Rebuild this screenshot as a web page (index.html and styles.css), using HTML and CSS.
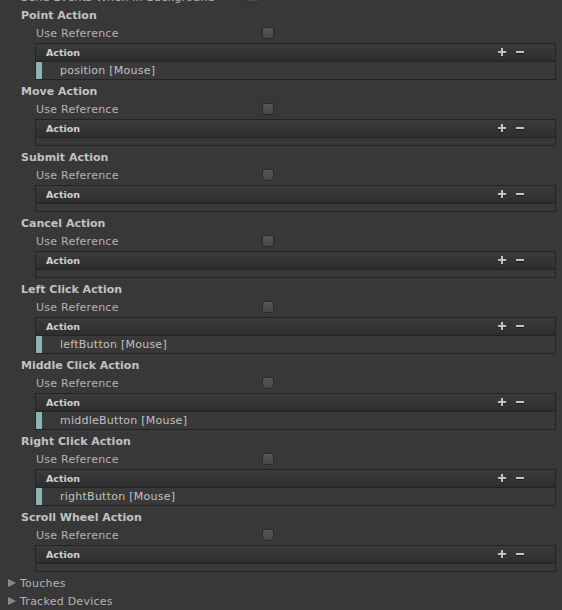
FILE: index.html
```html
<!DOCTYPE html>
<html lang="en">
<head>
    <meta charset="UTF-8">
    <title>Input System UI Input Module</title>
    <link rel="stylesheet" href="styles.css">
</head>
<body>
    <div class="inspector">
        <div class="field top-field">
            <span class="label">Send Events When in Background</span>
            <span class="checkbox"></span>
        </div>

        <div class="section">
            <div class="title">Point Action</div>
            <div class="field"><span class="label">Use Reference</span><span class="checkbox"></span></div>
            <div class="list">
                <div class="list-head"><span>Action</span>
                    <div class="tools">
                        <svg width="9" height="9" viewBox="0 0 9 9"><rect x="3" y="0" width="2" height="8"/><rect x="0" y="3" width="8" height="2"/></svg>
                        <svg width="9" height="9" viewBox="0 0 9 9"><rect x="0" y="3" width="8" height="2"/></svg>
                    </div>
                </div>
                <div class="list-item"><span class="bar"></span>position [Mouse]</div>
            </div>
        </div>

        <div class="section">
            <div class="title">Move Action</div>
            <div class="field"><span class="label">Use Reference</span><span class="checkbox"></span></div>
            <div class="list">
                <div class="list-head"><span>Action</span>
                    <div class="tools">
                        <svg width="9" height="9" viewBox="0 0 9 9"><rect x="3" y="0" width="2" height="8"/><rect x="0" y="3" width="8" height="2"/></svg>
                        <svg width="9" height="9" viewBox="0 0 9 9"><rect x="0" y="3" width="8" height="2"/></svg>
                    </div>
                </div>
                <div class="list-empty"></div>
            </div>
        </div>

        <div class="section">
            <div class="title">Submit Action</div>
            <div class="field"><span class="label">Use Reference</span><span class="checkbox"></span></div>
            <div class="list">
                <div class="list-head"><span>Action</span>
                    <div class="tools">
                        <svg width="9" height="9" viewBox="0 0 9 9"><rect x="3" y="0" width="2" height="8"/><rect x="0" y="3" width="8" height="2"/></svg>
                        <svg width="9" height="9" viewBox="0 0 9 9"><rect x="0" y="3" width="8" height="2"/></svg>
                    </div>
                </div>
                <div class="list-empty"></div>
            </div>
        </div>

        <div class="section">
            <div class="title">Cancel Action</div>
            <div class="field"><span class="label">Use Reference</span><span class="checkbox"></span></div>
            <div class="list">
                <div class="list-head"><span>Action</span>
                    <div class="tools">
                        <svg width="9" height="9" viewBox="0 0 9 9"><rect x="3" y="0" width="2" height="8"/><rect x="0" y="3" width="8" height="2"/></svg>
                        <svg width="9" height="9" viewBox="0 0 9 9"><rect x="0" y="3" width="8" height="2"/></svg>
                    </div>
                </div>
                <div class="list-empty"></div>
            </div>
        </div>

        <div class="section">
            <div class="title">Left Click Action</div>
            <div class="field"><span class="label">Use Reference</span><span class="checkbox"></span></div>
            <div class="list">
                <div class="list-head"><span>Action</span>
                    <div class="tools">
                        <svg width="9" height="9" viewBox="0 0 9 9"><rect x="3" y="0" width="2" height="8"/><rect x="0" y="3" width="8" height="2"/></svg>
                        <svg width="9" height="9" viewBox="0 0 9 9"><rect x="0" y="3" width="8" height="2"/></svg>
                    </div>
                </div>
                <div class="list-item"><span class="bar"></span>leftButton [Mouse]</div>
            </div>
        </div>

        <div class="section">
            <div class="title">Middle Click Action</div>
            <div class="field"><span class="label">Use Reference</span><span class="checkbox"></span></div>
            <div class="list">
                <div class="list-head"><span>Action</span>
                    <div class="tools">
                        <svg width="9" height="9" viewBox="0 0 9 9"><rect x="3" y="0" width="2" height="8"/><rect x="0" y="3" width="8" height="2"/></svg>
                        <svg width="9" height="9" viewBox="0 0 9 9"><rect x="0" y="3" width="8" height="2"/></svg>
                    </div>
                </div>
                <div class="list-item"><span class="bar"></span>middleButton [Mouse]</div>
            </div>
        </div>

        <div class="section">
            <div class="title">Right Click Action</div>
            <div class="field"><span class="label">Use Reference</span><span class="checkbox"></span></div>
            <div class="list">
                <div class="list-head"><span>Action</span>
                    <div class="tools">
                        <svg width="9" height="9" viewBox="0 0 9 9"><rect x="3" y="0" width="2" height="8"/><rect x="0" y="3" width="8" height="2"/></svg>
                        <svg width="9" height="9" viewBox="0 0 9 9"><rect x="0" y="3" width="8" height="2"/></svg>
                    </div>
                </div>
                <div class="list-item"><span class="bar"></span>rightButton [Mouse]</div>
            </div>
        </div>

        <div class="section">
            <div class="title">Scroll Wheel Action</div>
            <div class="field"><span class="label">Use Reference</span><span class="checkbox"></span></div>
            <div class="list">
                <div class="list-head"><span>Action</span>
                    <div class="tools">
                        <svg width="9" height="9" viewBox="0 0 9 9"><rect x="3" y="0" width="2" height="8"/><rect x="0" y="3" width="8" height="2"/></svg>
                        <svg width="9" height="9" viewBox="0 0 9 9"><rect x="0" y="3" width="8" height="2"/></svg>
                    </div>
                </div>
                <div class="list-empty"></div>
            </div>
        </div>

        <div class="foldout"><span class="arrow"></span>Touches</div>
        <div class="foldout"><span class="arrow"></span>Tracked Devices</div>
    </div>
</body>
</html>
```

FILE: styles.css
```css
* {
    margin: 0;
    padding: 0;
    box-sizing: border-box;
}

body {
    background: #383838;
    font-family: "DejaVu Sans", sans-serif;
    font-size: 11px;
    color: #b4b4b4;
    overflow: hidden;
}

.inspector {
    margin-top: -12px;
}

.field {
    display: flex;
    align-items: center;
    height: 18px;
    padding-left: 36px;
    letter-spacing: 0.25px;
}

.top-field {
    padding-left: 21px;
}

.label {
    width: 226px;
    white-space: nowrap;
}

.checkbox {
    width: 12px;
    height: 12px;
    border: 1px solid #2b2b2b;
    border-radius: 2px;
    background: linear-gradient(#575757, #464646);
}

.title {
    height: 18px;
    padding-top: 2px;
    line-height: 16px;
    padding-left: 21px;
    font-weight: bold;
    color: #c2c2c2;
}

.list {
    margin: 1px 6px 2px 35px;
    border: 1px solid #232323;
    background: #393939;
}

.list-head {
    display: flex;
    align-items: center;
    justify-content: space-between;
    height: 18px;
    padding: 0 30px 0 10px;
    background: linear-gradient(#3b3b3b, #2e2e2e);
    border-bottom: 1px solid #232323;
    font-size: 9.5px;
    font-weight: bold;
    color: #d0d0d0;
}

.tools {
    display: flex;
    gap: 9px;
}

.tools svg {
    fill: #c4c4c4;
    filter: drop-shadow(0 1px 0 #1c1c1c);
}

.list-item {
    display: flex;
    align-items: center;
    height: 17px;
    color: #c0c0c0;
    letter-spacing: 0.25px;
}

.bar {
    width: 6px;
    height: 17px;
    margin-right: 18px;
    background: #8db4b4;
}

.list-empty {
    height: 7px;
}

.foldout {
    display: flex;
    align-items: center;
    height: 18px;
    padding-left: 8px;
    color: #b4b4b4;
    letter-spacing: 0.25px;
}

.arrow {
    width: 0;
    height: 0;
    margin-right: 4px;
    border-top: 4.5px solid transparent;
    border-bottom: 4.5px solid transparent;
    border-left: 8px solid #8a8a8a;
}
```
